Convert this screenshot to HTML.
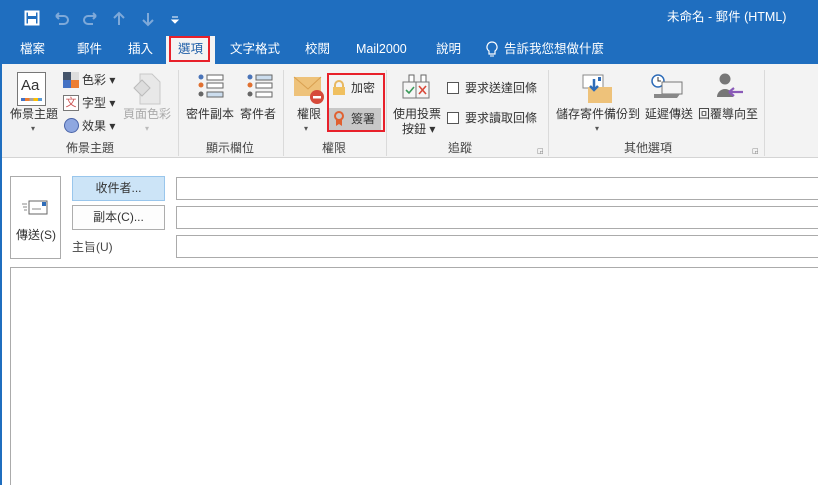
<!DOCTYPE html>
<html><head><meta charset="utf-8"><style>
*{margin:0;padding:0;box-sizing:border-box}
html,body{width:818px;height:485px;overflow:hidden}
body{background:#fff;font-family:"Liberation Sans","Noto Sans CJK TC",sans-serif;font-size:12px;color:#262626;position:relative}
.a{position:absolute}
.t{white-space:nowrap;line-height:16px}
.title{left:0;top:0;width:818px;height:64px;background:#1f6ebf}
.tab{color:#fff;font-size:12.5px;top:41px}
.rib{left:0;top:64px;width:818px;height:94px;background:#f3f3f3;border-bottom:1px solid #d4d4d4}
.sep{top:70px;width:1px;height:86px;background:#dadada}
.gl{top:140px;font-size:12px;color:#444}
.lbl{font-size:12px;color:#333}
.chk{width:12px;height:12px;border:1px solid #555;background:#fff}
.btn{border:1px solid #adadad;background:#fdfdfd;text-align:center;line-height:22px;color:#333}
.inp{border:1px solid #ababab;background:#fff;height:23px;left:176px;width:650px}
</style></head><body>
<div class="a title"></div>
<svg class="a" style="left:24px;top:10px" width="160" height="18">
<rect x="1.5" y="1.5" width="13" height="13" fill="none" stroke="#fff" stroke-width="2"/><rect x="4" y="1" width="8" height="5" fill="#fff"/><rect x="4" y="9" width="8" height="5" fill="#fff"/>
<path d="M32 6 h8 a4 4 0 0 1 0 8 h-5 M32 6 l3 -3 M32 6 l3 3" stroke="#7ea9d9" stroke-width="2" fill="none"/>
<path d="M72 6 h-8 a4 4 0 0 0 0 8 h5 M72 6 l-3 -3 M72 6 l-3 3" stroke="#7ea9d9" stroke-width="2" fill="none"/>
<path d="M95 15 V3 M90 8 l5-5 5 5" stroke="#7ea9d9" stroke-width="2" fill="none"/>
<path d="M124 3 V15 M119 10 l5 5 5-5" stroke="#7ea9d9" stroke-width="2" fill="none"/>
<path d="M148 7 h6 M148 10 h6 l-3 3z" stroke="#fff" fill="#fff"/>
</svg>
<div class="a t" style="left:667px;top:9px;color:#fff;font-size:12.5px">未命名 - 郵件 (HTML)</div>
<div class="a t tab" style="left:20px">檔案</div>
<div class="a t tab" style="left:77px">郵件</div>
<div class="a t tab" style="left:128px">插入</div>
<div class="a" style="left:166px;top:36px;width:49px;height:28px;background:#f3f3f3"></div>
<div class="a" style="left:169px;top:36px;width:41px;height:26px;border:2px solid #e8202a"></div>
<div class="a t tab" style="left:178px;color:#1f5fa8">選項</div>
<div class="a t tab" style="left:230px">文字格式</div>
<div class="a t tab" style="left:305px">校閱</div>
<div class="a t tab" style="left:356px">Mail2000</div>
<div class="a t tab" style="left:436px">說明</div>
<svg class="a" style="left:486px;top:41px" width="12" height="18"><path d="M6 1a5 5 0 0 0-3 9v3h6v-3a5 5 0 0 0-3-9z" fill="none" stroke="#fff" stroke-width="1.2"/><path d="M4 15h4" stroke="#fff"/></svg>
<div class="a t tab" style="left:504px">告訴我您想做什麼</div>

<div class="a rib"></div>
<div class="a" style="left:0;top:64px;width:2px;height:421px;background:#1f6ebf"></div>
<div class="a" style="left:17px;top:72px;width:29px;height:34px;border:1px solid #777;background:#fff"></div>
<div class="a t" style="left:21px;top:78px;font-size:15px;color:#333">Aa</div>
<div class="a" style="left:21px;top:98px;width:21px;height:3px;background:linear-gradient(90deg,#4472c4 0 20%,#ed7d31 20% 40%,#a5a5a5 40% 60%,#ffc000 60% 80%,#5b9bd5 80%)"></div>
<div class="a t lbl" style="left:10px;top:106px">佈景主題</div>
<div class="a t" style="left:31px;top:121px;font-size:8px;color:#555">▾</div>
<div class="a" style="left:63px;top:72px;width:16px;height:16px;background:linear-gradient(90deg,#44546a 50%,#ddd 50%);"></div>
<div class="a" style="left:63px;top:80px;width:16px;height:8px;background:linear-gradient(90deg,#4472c4 50%,#ed7d31 50%)"></div>
<div class="a t lbl" style="left:82px;top:72px">色彩 ▾</div>
<div class="a" style="left:63px;top:95px;width:16px;height:16px;border:1px solid #777;background:#fff;color:#c55;font-size:11px;line-height:14px;text-align:center">文</div>
<div class="a t lbl" style="left:82px;top:95px">字型 ▾</div>
<div class="a" style="left:64px;top:118px;width:15px;height:15px;border-radius:50%;background:#8ea7e0;border:1px solid #4a64a8"></div>
<div class="a t lbl" style="left:82px;top:118px">效果 ▾</div>
<svg class="a" style="left:130px;top:72px" width="36" height="34"><path d="M10 2h12l8 8v22H10z" fill="#e8e8e8" stroke="#c8c8c8"/><path d="M4 16l8-8 8 8-8 8z" fill="#ddd" stroke="#bbb"/></svg>
<div class="a t lbl" style="left:123px;top:106px;color:#aaa">頁面色彩</div>
<div class="a t" style="left:145px;top:121px;font-size:8px;color:#bbb">▾</div>
<div class="a t gl" style="left:66px">佈景主題</div>
<div class="a sep" style="left:178px"></div>
<svg class="a" style="left:197px;top:74px" width="30" height="28"><circle cx="4" cy="3" r="2.5" fill="#4a74b8"/><circle cx="4" cy="11" r="2.5" fill="#e07030"/><circle cx="4" cy="20" r="2.5" fill="#666"/><rect x="10" y="1" width="16" height="5" fill="#fff" stroke="#666"/><rect x="10" y="9" width="16" height="5" fill="#fff" stroke="#666"/><rect x="10" y="18" width="16" height="5" fill="#cde" stroke="#666"/></svg>
<div class="a t lbl" style="left:186px;top:106px">密件副本</div>
<svg class="a" style="left:246px;top:74px" width="30" height="28"><circle cx="4" cy="3" r="2.5" fill="#4a74b8"/><circle cx="4" cy="11" r="2.5" fill="#e07030"/><circle cx="4" cy="20" r="2.5" fill="#666"/><rect x="10" y="1" width="16" height="5" fill="#cde" stroke="#666"/><rect x="10" y="9" width="16" height="5" fill="#fff" stroke="#666"/><rect x="10" y="18" width="16" height="5" fill="#fff" stroke="#666"/></svg>
<div class="a t lbl" style="left:240px;top:106px">寄件者</div>
<div class="a t gl" style="left:206px">顯示欄位</div>
<div class="a sep" style="left:283px"></div>
<svg class="a" style="left:293px;top:76px" width="34" height="30"><rect x="1" y="1" width="27" height="19" fill="#eec27a"/><path d="M1 1l14 12 13-12" fill="none" stroke="#d9a050"/><circle cx="24" cy="21" r="7" fill="#d64a3a"/><rect x="20" y="20" width="8" height="2.5" fill="#fff"/></svg>
<div class="a t lbl" style="left:297px;top:106px">權限</div>
<div class="a t" style="left:304px;top:121px;font-size:8px;color:#555">▾</div>
<div class="a" style="left:328px;top:108px;width:53px;height:22px;background:#c8c8c8"></div>
<div class="a" style="left:327px;top:73px;width:58px;height:59px;border:2px solid #e8202a"></div>
<svg class="a" style="left:332px;top:80px" width="14" height="16"><path d="M3 7V5a4 4 0 0 1 8 0v2" stroke="#e8b860" stroke-width="2" fill="none"/><rect x="1" y="7" width="12" height="8" fill="#f0c060"/></svg>
<div class="a t lbl" style="left:351px;top:80px">加密</div>
<svg class="a" style="left:333px;top:111px" width="12" height="16"><circle cx="6" cy="5" r="4" fill="none" stroke="#e06030" stroke-width="2"/><path d="M3 8v7l3-2 3 2V8" fill="#e06030"/></svg>
<div class="a t lbl" style="left:351px;top:111px">簽署</div>
<div class="a t gl" style="left:322px">權限</div>
<div class="a sep" style="left:386px"></div>
<svg class="a" style="left:401px;top:74px" width="30" height="28"><rect x="8" y="1" width="5" height="7" fill="#fff" stroke="#666"/><rect x="20" y="1" width="5" height="7" fill="#fff" stroke="#666"/><rect x="2" y="8" width="13" height="16" fill="#f6f6f6" stroke="#777"/><rect x="15" y="8" width="13" height="16" fill="#f6f6f6" stroke="#777"/><path d="M5 16l3 3 5-6" stroke="#3a9a5a" stroke-width="1.6" fill="none"/><path d="M18 12l7 8M25 12l-7 8" stroke="#d94a3a" stroke-width="1.6"/></svg>
<div class="a t lbl" style="left:393px;top:106px">使用投票</div>
<div class="a t lbl" style="left:402px;top:121px">按鈕 ▾</div>
<div class="a chk" style="left:447px;top:82px"></div>
<div class="a t lbl" style="left:465px;top:80px">要求送達回條</div>
<div class="a chk" style="left:447px;top:112px"></div>
<div class="a t lbl" style="left:465px;top:110px">要求讀取回條</div>
<div class="a t gl" style="left:448px">追蹤</div>
<div class="a t" style="left:537px;top:144px;font-size:7px;color:#777">◲</div>
<div class="a sep" style="left:548px"></div>
<svg class="a" style="left:582px;top:74px" width="30" height="30"><rect x="1" y="1" width="20" height="13" fill="#fff" stroke="#888"/><rect x="16" y="3" width="3" height="4" fill="#2e6cb8"/><rect x="6" y="13" width="24" height="16" fill="#eec27a"/><path d="M12 5v10M8 12l4 4 4-4" stroke="#2e6cb8" stroke-width="2.5" fill="none"/></svg>
<div class="a t lbl" style="left:556px;top:106px">儲存寄件備份到</div>
<div class="a t" style="left:595px;top:121px;font-size:8px;color:#555">▾</div>
<svg class="a" style="left:650px;top:72px" width="34" height="30"><circle cx="8" cy="9" r="6" fill="#fff" stroke="#2e6cb8" stroke-width="1.5"/><path d="M8 5v4h3" stroke="#333" fill="none"/><rect x="12" y="10" width="20" height="12" fill="#f4f4f4" stroke="#777"/><path d="M4 22h26l-3 4H4z" fill="#888"/></svg>
<div class="a t lbl" style="left:645px;top:106px">延遲傳送</div>
<svg class="a" style="left:715px;top:72px" width="30" height="30"><circle cx="10" cy="7" r="5.5" fill="#777"/><path d="M2 25a8 8 0 0 1 16 0z" fill="#777"/><path d="M14 20h14M14 20l5-4M14 20l5 4" stroke="#8a5ab8" stroke-width="2.2" fill="none"/></svg>
<div class="a t lbl" style="left:698px;top:106px">回覆導向至</div>
<div class="a t gl" style="left:624px">其他選項</div>
<div class="a t" style="left:752px;top:144px;font-size:7px;color:#777">◲</div>
<div class="a sep" style="left:764px"></div>

<div class="a" style="left:10px;top:176px;width:51px;height:83px;border:1px solid #ababab;background:#fff"></div>
<svg class="a" style="left:20px;top:200px" width="30" height="16"><rect x="9" y="1" width="18" height="13" fill="#fff" stroke="#666"/><rect x="22" y="2" width="4" height="4" fill="#2e6cb8"/><path d="M12 9h9" stroke="#888"/><path d="M2 4h5M3 7h4M4 10h3" stroke="#888"/></svg>
<div class="a t" style="left:16px;top:227px;font-size:12px;color:#333">傳送(S)</div>
<div class="a btn" style="left:72px;top:176px;width:93px;height:25px;background:#cce4f7;border-color:#99c6ec">收件者...</div>
<div class="a btn" style="left:72px;top:205px;width:93px;height:25px">副本(C)...</div>
<div class="a t" style="left:72px;top:239px;color:#444">主旨(U)</div>
<div class="a inp" style="left:176px;top:177px"></div>
<div class="a inp" style="left:176px;top:206px"></div>
<div class="a inp" style="left:176px;top:235px"></div>
<div class="a" style="left:10px;top:267px;width:820px;height:230px;border:1px solid #ababab"></div>
</body></html>
